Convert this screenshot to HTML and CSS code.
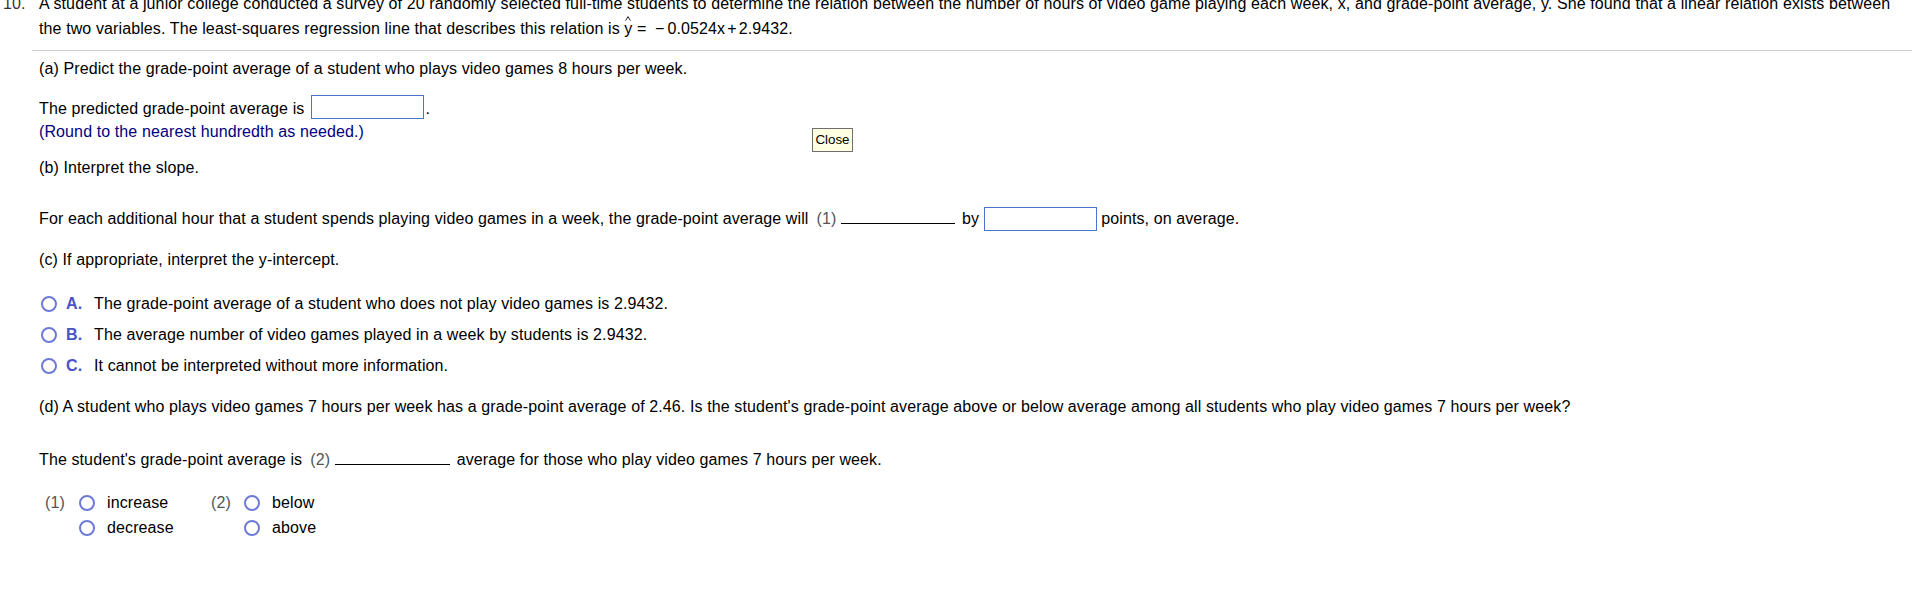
FILE: index.html
```html
<!DOCTYPE html>
<html lang="en">
<head>
<meta charset="utf-8">
<title>Question 10</title>
<link rel="stylesheet" href="styles.css">
</head>
<body>
<div class="page">
  <div class="stem">
    <div class="qnum">10.</div>
    <div class="stem-text">A student at a junior college conducted a survey of 20 randomly selected full-time students to determine the relation between the number of hours of video game playing each week, x, and grade-point average, y. She found that a linear relation exists between<br>the two variables. The least-squares regression line that describes this relation is <span class="yhat">y<svg class="hat" width="6" height="5" viewBox="0 0 6 5" aria-hidden="true"><path d="M0.6 4.6 L3 0.6 L5.4 4.6" fill="none" stroke="#222" stroke-width="1"/></svg></span> = <span class="minus">−</span>0.0524x<span class="plus">+</span>2.9432.</div>
  </div>
  <div class="divider"></div>
  <div class="content">
    <p class="line part-a">(a) Predict the grade-point average of a student who plays video games 8 hours per week.</p>
    <p class="line row-predict">The predicted grade-point average is <span class="answer-box box-a"></span><span class="period">.</span></p>
    <p class="line note">(Round to the nearest hundredth as needed.)</p>
    <p class="line part-b">(b) Interpret the slope.</p>
    <p class="line row-slope">For each additional hour that a student spends playing video games in a week, the grade-point average will <span class="ref">(1)</span><span class="blank"></span> by <span class="answer-box box-b"></span> points, on average.</p>
    <p class="line part-c">(c) If appropriate, interpret the y-intercept.</p>
    <div class="options">
      <div class="option"><span class="radio"></span><span class="opt-letter">A.</span>The grade-point average of a student who does not play video games is 2.9432.</div>
      <div class="option"><span class="radio"></span><span class="opt-letter">B.</span>The average number of video games played in a week by students is 2.9432.</div>
      <div class="option"><span class="radio"></span><span class="opt-letter">C.</span>It cannot be interpreted without more information.</div>
    </div>
    <p class="line part-d">(d) A student who plays video games 7 hours per week has a grade-point average of 2.46. Is the student's grade-point average above or below average among all students who play video games 7 hours per week?</p>
    <p class="line row-gpa">The student's grade-point average is <span class="ref">(2)</span><span class="blank"></span> average for those who play video games 7 hours per week.</p>
    <div class="choices">
      <div class="choice-group group-1">
        <span class="choice-ref">(1)</span>
        <div class="choice-list">
          <div class="choice"><span class="radio"></span>increase</div>
          <div class="choice"><span class="radio"></span>decrease</div>
        </div>
      </div>
      <div class="choice-group group-2">
        <span class="choice-ref">(2)</span>
        <div class="choice-list">
          <div class="choice"><span class="radio"></span>below</div>
          <div class="choice"><span class="radio"></span>above</div>
        </div>
      </div>
    </div>
  </div>
  <button class="close-btn" type="button">Close</button>
</div>
</body>
</html>
```

FILE: styles.css
```css
html, body {
  margin: 0;
  padding: 0;
  background: #ffffff;
}

body {
  font-family: "Liberation Sans", Arial, sans-serif;
  font-size: 16px;
  color: #000000;
  overflow: hidden;
}

.page {
  position: relative;
  height: 611px;
  letter-spacing: 0.11px;
}

.stem {
  display: flex;
  margin-top: -9px;
  line-height: 25px;
  white-space: nowrap;
}

.qnum {
  width: 36px;
  padding-left: 3px;
  color: #333333;
}

.yhat {
  position: relative;
}

.hat {
  position: absolute;
  left: 50%;
  top: -4px;
  margin-left: -3px;
}

.minus {
  margin-left: 4px;
  margin-right: 3px;
}

.plus {
  margin-left: 2px;
  margin-right: 2px;
}

.divider {
  margin-top: 9px;
  margin-left: 32px;
  height: 1px;
  background: #d0d0d8;
}

.content {
  padding-left: 39px;
}

.line {
  margin: 0;
  line-height: 20px;
  white-space: nowrap;
}

.part-a { margin-top: 7.5px; }
.row-predict { margin-top: 16.5px; }
.note { margin-top: 2.5px; color: #000080; }
.part-b { margin-top: 16px; }
.row-slope { margin-top: 29.5px; }
.part-c { margin-top: 18.5px; }
.part-d { margin-top: 15.5px; }
.row-gpa { margin-top: 33px; }

.answer-box {
  display: inline-block;
  width: 111px;
  height: 22px;
  border: 1px solid #4a74c9;
  background: #ffffff;
}

.box-a {
  margin-left: 1.5px;
  vertical-align: -5px;
}

.box-b {
  vertical-align: -7px;
}

.period {
  margin-left: 2px;
}

.ref {
  color: #555555;
  margin-left: 3.5px;
}

.blank {
  display: inline-block;
  width: 114px;
  height: 0;
  border-bottom: 1px solid #000000;
  margin-left: 4.5px;
  margin-right: 2.5px;
}

.row-gpa .blank {
  width: 115px;
}

.options {
  margin-top: 18.5px;
}

.option {
  height: 31px;
  line-height: 31px;
  padding-left: 2px;
  white-space: nowrap;
}

.radio {
  display: inline-block;
  box-sizing: border-box;
  width: 16px;
  height: 16px;
  border: 2px solid #6d7bd6;
  border-radius: 50%;
  background: #ffffff;
  vertical-align: -3px;
}

.option .radio {
  margin-right: 9px;
}

.opt-letter {
  display: inline-block;
  width: 28px;
  font-weight: bold;
  color: #4a52c8;
}

.choices {
  display: flex;
  margin-top: 20.5px;
  margin-left: 6px;
}

.choice-group {
  display: flex;
}

.group-1 {
  width: 166px;
}

.choice-ref {
  width: 34px;
  line-height: 25px;
  color: #555555;
}

.group-2 .choice-ref {
  width: 33px;
}

.choice {
  line-height: 25px;
  height: 25px;
  white-space: nowrap;
}

.choice .radio {
  margin-right: 12px;
}

.close-btn {
  position: absolute;
  left: 812px;
  top: 137px;
  width: 41px;
  height: 24px;
  box-sizing: border-box;
  padding: 0;
  margin: 0;
  border: 1px solid #6e6e6e;
  border-radius: 0;
  background: #ffffe1;
  font-family: "Liberation Sans", Arial, sans-serif;
  font-size: 13.33px;
  letter-spacing: normal;
  color: #000000;
  line-height: 20px;
  text-align: center;
}
```
